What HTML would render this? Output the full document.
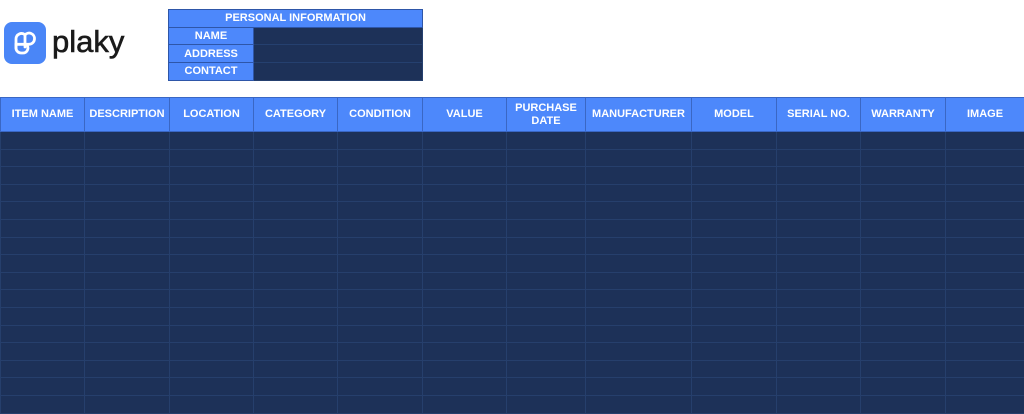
<!DOCTYPE html>
<html><head><style>
body{margin:0;width:1024px;height:414px;background:#fff;overflow:hidden;font-family:"Liberation Sans",sans-serif;position:relative}
.a{position:absolute;box-sizing:border-box}
table{border-collapse:collapse;table-layout:fixed}
td,th{padding:0;box-sizing:border-box}
#info{position:absolute;left:168px;top:9px;width:254px;border:1px solid #3d6bc9}
#info td{height:17.7px;border:1px solid #2e56a8;color:#fff;font-weight:bold;font-size:11px;text-align:center}
.lb{background:#4d88fb}
.dk{background:#1d3158;border-color:#25406f!important}
#main{position:absolute;left:0;top:97px;width:1024px}
#main th{background:#4d88fb;color:#fff;font-size:11px;font-weight:bold;height:34px;border:1px solid #3a67c4;line-height:13px}
#main td{background:#1d3158;border:1px solid #263f6c;height:17.6px}
</style></head><body>
<div class="a" style="left:4px;top:22px;width:42px;height:42px;background:#4a86f7;border-radius:8px">
<svg width="42" height="42" viewBox="0 0 42 42"><g fill="none" stroke="#fff" stroke-width="2.8" stroke-linejoin="round" stroke-linecap="round"><path d="M12 26 V17 a5.5 5.5 0 0 1 9 -4.2 a5.5 5.5 0 0 1 9.5 4 a5.5 5.5 0 0 1 -5.5 5.5 H12"/><path d="M21 13 V25"/><path d="M12 22 V26 a5 5 0 0 0 5 5 h2 a5 5 0 0 0 4.5 -7"/></g></svg>
</div>
<div class="a" style="left:52px;top:24px;font-size:31px;color:#1a1a1a;font-weight:500;-webkit-text-stroke:0.6px #1a1a1a">plaky</div>
<table id="info">
<colgroup><col style="width:85px"><col style="width:169px"></colgroup>
<tr><td colspan="2" class="lb">PERSONAL INFORMATION</td></tr>
<tr><td class="lb">NAME</td><td class="dk"></td></tr>
<tr><td class="lb">ADDRESS</td><td class="dk"></td></tr>
<tr><td class="lb">CONTACT</td><td class="dk"></td></tr>
</table>
<table id="main">
<colgroup><col style="width:84px"><col style="width:85px"><col style="width:84px"><col style="width:84px"><col style="width:85px"><col style="width:84px"><col style="width:79px"><col style="width:106px"><col style="width:85px"><col style="width:84px"><col style="width:85px"><col style="width:79px"></colgroup>
<tr><th>ITEM NAME</th><th>DESCRIPTION</th><th>LOCATION</th><th>CATEGORY</th><th>CONDITION</th><th>VALUE</th><th>PURCHASE<br>DATE</th><th>MANUFACTURER</th><th>MODEL</th><th>SERIAL NO.</th><th>WARRANTY</th><th>IMAGE</th></tr>
<tr><td></td><td></td><td></td><td></td><td></td><td></td><td></td><td></td><td></td><td></td><td></td><td></td></tr>
<tr><td></td><td></td><td></td><td></td><td></td><td></td><td></td><td></td><td></td><td></td><td></td><td></td></tr>
<tr><td></td><td></td><td></td><td></td><td></td><td></td><td></td><td></td><td></td><td></td><td></td><td></td></tr>
<tr><td></td><td></td><td></td><td></td><td></td><td></td><td></td><td></td><td></td><td></td><td></td><td></td></tr>
<tr><td></td><td></td><td></td><td></td><td></td><td></td><td></td><td></td><td></td><td></td><td></td><td></td></tr>
<tr><td></td><td></td><td></td><td></td><td></td><td></td><td></td><td></td><td></td><td></td><td></td><td></td></tr>
<tr><td></td><td></td><td></td><td></td><td></td><td></td><td></td><td></td><td></td><td></td><td></td><td></td></tr>
<tr><td></td><td></td><td></td><td></td><td></td><td></td><td></td><td></td><td></td><td></td><td></td><td></td></tr>
<tr><td></td><td></td><td></td><td></td><td></td><td></td><td></td><td></td><td></td><td></td><td></td><td></td></tr>
<tr><td></td><td></td><td></td><td></td><td></td><td></td><td></td><td></td><td></td><td></td><td></td><td></td></tr>
<tr><td></td><td></td><td></td><td></td><td></td><td></td><td></td><td></td><td></td><td></td><td></td><td></td></tr>
<tr><td></td><td></td><td></td><td></td><td></td><td></td><td></td><td></td><td></td><td></td><td></td><td></td></tr>
<tr><td></td><td></td><td></td><td></td><td></td><td></td><td></td><td></td><td></td><td></td><td></td><td></td></tr>
<tr><td></td><td></td><td></td><td></td><td></td><td></td><td></td><td></td><td></td><td></td><td></td><td></td></tr>
<tr><td></td><td></td><td></td><td></td><td></td><td></td><td></td><td></td><td></td><td></td><td></td><td></td></tr>
<tr><td></td><td></td><td></td><td></td><td></td><td></td><td></td><td></td><td></td><td></td><td></td><td></td></tr>
</table>
</body></html>
